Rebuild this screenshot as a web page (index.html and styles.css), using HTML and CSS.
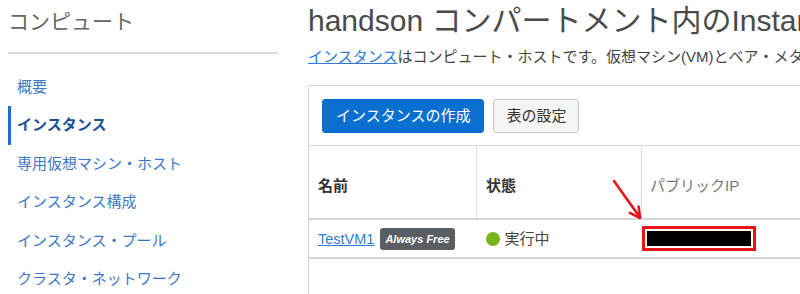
FILE: index.html
```html
<!DOCTYPE html>
<html lang="ja">
<head>
<meta charset="utf-8">
<title>インスタンス</title>
<link rel="stylesheet" href="styles.css">
</head>
<body>
<div class="page">
  <aside class="sidebar">
    <h2 class="side-title">コンピュート</h2>
    <nav class="side-nav">
      <a class="nav-item" href="#">概要</a>
      <a class="nav-item active" href="#">インスタンス</a>
      <a class="nav-item" href="#">専用仮想マシン・ホスト</a>
      <a class="nav-item" href="#">インスタンス構成</a>
      <a class="nav-item" href="#">インスタンス・プール</a>
      <a class="nav-item" href="#">クラスタ・ネットワーク</a>
    </nav>
  </aside>
  <main class="main">
    <h1 class="page-title">handson コンパートメント内のInstances</h1>
    <p class="desc"><a href="#" class="desc-link">インスタンス</a>はコンピュート・ホストです。仮想マシン(VM)とベア・メタル・インスタンスの2種類があります。</p>
    <div class="panel">
      <div class="toolbar">
        <button class="btn btn-primary">インスタンスの作成</button>
        <button class="btn">表の設定</button>
      </div>
      <table class="grid">
        <thead>
          <tr>
            <th class="col-name">名前</th>
            <th class="col-state">状態</th>
            <th class="col-ip">パブリックIP</th>
          </tr>
        </thead>
        <tbody>
          <tr>
            <td class="cell"><a href="#" class="vm-link">TestVM1</a><span class="badge">Always Free</span></td>
            <td class="cell"><span class="status"><span class="dot"></span>実行中</span></td>
            <td class="cell cell-ip"><span class="redact-box"><span class="redact"></span></span></td>
          </tr>
        </tbody>
      </table>
    </div>
  </main>
</div>
<svg class="annot" width="800" height="294" viewBox="0 0 800 294">
  <line x1="614" y1="181" x2="639" y2="216" stroke="#e8141a" stroke-width="2.6" stroke-linecap="round"/>
  <polyline points="629.8,212.8 640,218 638.6,206.6" fill="none" stroke="#e8141a" stroke-width="2.6" stroke-linecap="round" stroke-linejoin="round"/>
</svg>
</body>
</html>
```
FILE: styles.css
```css
html, body {
  margin: 0;
  padding: 0;
  background: #ffffff;
}
body {
  width: 800px;
  height: 294px;
  overflow: hidden;
  position: relative;
  font-family: "Liberation Sans", "Noto Sans CJK JP", sans-serif;
  color: #333;
}
.page {
  display: flex;
  align-items: flex-start;
  height: 294px;
}
.sidebar {
  flex: 0 0 270px;
  margin-left: 8px;
}
.side-title {
  margin: 0;
  padding: 7px 0 15px;
  font-size: 21px;
  line-height: 30px;
  font-weight: normal;
  color: #666;
  border-bottom: 2px solid #dadcdf;
}
.side-nav {
  display: flex;
  flex-direction: column;
  margin-top: 14px;
}
.nav-item {
  display: block;
  height: 38.4px;
  line-height: 38.4px;
  padding-left: 6px;
  border-left: 3px solid transparent;
  font-size: 15px;
  color: #3d78c6;
  text-decoration: none;
  white-space: nowrap;
}
.nav-item.active {
  border-left-color: #1a72d0;
  color: #1b4f96;
  font-weight: bold;
}
.main {
  flex: 1 1 auto;
  min-width: 0;
  margin-left: 30px;
  overflow: hidden;
  height: 294px;
}
.page-title {
  margin: 0;
  padding-top: 4px;
  font-size: 30px;
  line-height: 34px;
  font-weight: normal;
  color: #4a4a4a;
  white-space: nowrap;
}
.desc {
  margin: 9px 0 0;
  font-size: 15px;
  line-height: 20px;
  color: #444;
  white-space: nowrap;
}
.desc-link {
  color: #2f7bd6;
  text-decoration: underline;
}
.panel {
  margin-top: 18px;
  box-sizing: border-box;
  height: 209px;
  border: 1px solid #d4d4d4;
  border-right: none;
  border-bottom: none;
  border-top-left-radius: 2px;
}
.toolbar {
  display: flex;
  gap: 9px;
  padding: 13px 0 12px 13px;
}
.btn {
  height: 34px;
  padding: 0 12px;
  font-family: "Liberation Sans", "Noto Sans CJK JP", sans-serif;
  font-size: 15px;
  line-height: 32px;
  color: #333;
  background: #f5f5f5;
  border: 1px solid #c6c6c6;
  border-radius: 3px;
}
.btn-primary {
  padding: 0 13px;
  color: #ffffff;
  background: #0a70cf;
  border-color: #0a6cc8;
}
.grid {
  border-collapse: collapse;
  width: 100%;
  border-top: 1px solid #d9d9d9;
}
.grid th {
  padding: 30px 9px 22px;
  font-size: 15px;
  line-height: 20px;
  text-align: left;
  color: #333;
  font-weight: bold;
  border-bottom: 2px solid #d4d6d8;
  border-right: 1px solid #dcdcdc;
  white-space: nowrap;
}
.grid th.col-name {
  width: 149px;
}
.grid th.col-state {
  width: 146px;
}
.grid th.col-ip {
  padding-left: 8px;
  font-weight: normal;
  color: #777;
  border-right: none;
}
.cell {
  height: 37px;
  padding: 0 9px;
  font-size: 15px;
  vertical-align: middle;
  border-bottom: 2px solid #d4d6d8;
  white-space: nowrap;
}
.cell-ip {
  padding-left: 0;
}
.vm-link {
  font-size: 14.5px;
  color: #2f7bd6;
  text-decoration: underline;
  vertical-align: middle;
}
.badge {
  display: inline-block;
  vertical-align: middle;
  margin-left: 6px;
  height: 22px;
  line-height: 22px;
  padding: 0 5px;
  background: #5a5d61;
  color: #ffffff;
  font-size: 11px;
  font-weight: bold;
  font-style: italic;
  border-radius: 3px;
}
.status {
  display: inline-flex;
  align-items: center;
  gap: 5px;
  color: #444;
  line-height: 20px;
}
.dot {
  display: inline-block;
  width: 14px;
  height: 14px;
  border-radius: 50%;
  background: #7ab51d;
}
.redact-box {
  display: inline-block;
  vertical-align: middle;
  border: 3px solid #e8141a;
  padding: 2px;
  background: #ffffff;
  line-height: 0;
}
.redact {
  display: inline-block;
  width: 104px;
  height: 15px;
  background: #000000;
}
.annot {
  position: absolute;
  left: 0;
  top: 0;
  pointer-events: none;
}
```
